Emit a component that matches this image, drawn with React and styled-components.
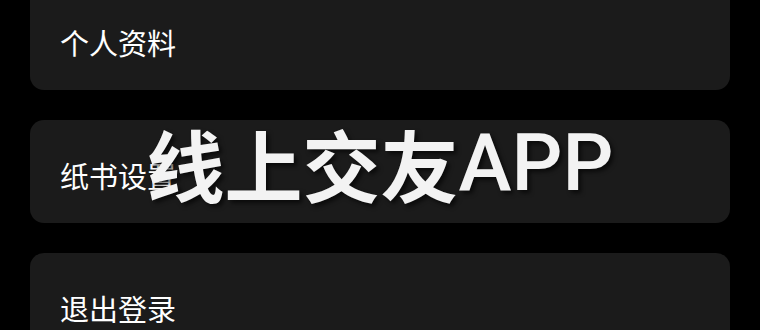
import React from "react";
import styled, { createGlobalStyle } from "styled-components";

const GlobalStyle = createGlobalStyle`
  html, body {
    margin: 0;
    padding: 0;
    background: #000;
    overflow: hidden;
  }
  body {
    font-family: "Noto Sans CJK SC", "Noto Sans", sans-serif;
  }
`;

const Page = styled.div`
  display: flex;
  flex-direction: column;
  gap: 30px;
  padding: 0 30px;
  margin-top: -13px;
`;

const Card = styled.div`
  height: 103px;
  box-sizing: border-box;
  background-color: #1b1b1b;
  border-radius: 14px;
  display: flex;
  align-items: center;
  padding: 6px 30px 0;
  color: #fff;
  font-size: 29px;
`;

const Watermark = styled.div`
  position: fixed;
  inset: 0;
  display: flex;
  align-items: center;
  justify-content: center;
  pointer-events: none;
  color: #f3f3f3;
  font-size: 78px;
  font-weight: 700;
  text-shadow: 3px 3px 4px rgba(0, 0, 0, 0.6);
  padding-bottom: 4px;
`;

const Latin = styled.span`
  font-family: Roboto, "Noto Sans", sans-serif;
  font-weight: 500;
  font-size: 80px;
`;

const items = ["个人资料", "纸书设置", "退出登录"];

const App = () => {
  return (
    <>
      <GlobalStyle />
      <Page>
        {items.map(function (t) {
          return <Card key={t}>{t}</Card>;
        })}
      </Page>
      <Watermark>
        线上交友<Latin>APP</Latin>
      </Watermark>
    </>
  );
};

export default App;
